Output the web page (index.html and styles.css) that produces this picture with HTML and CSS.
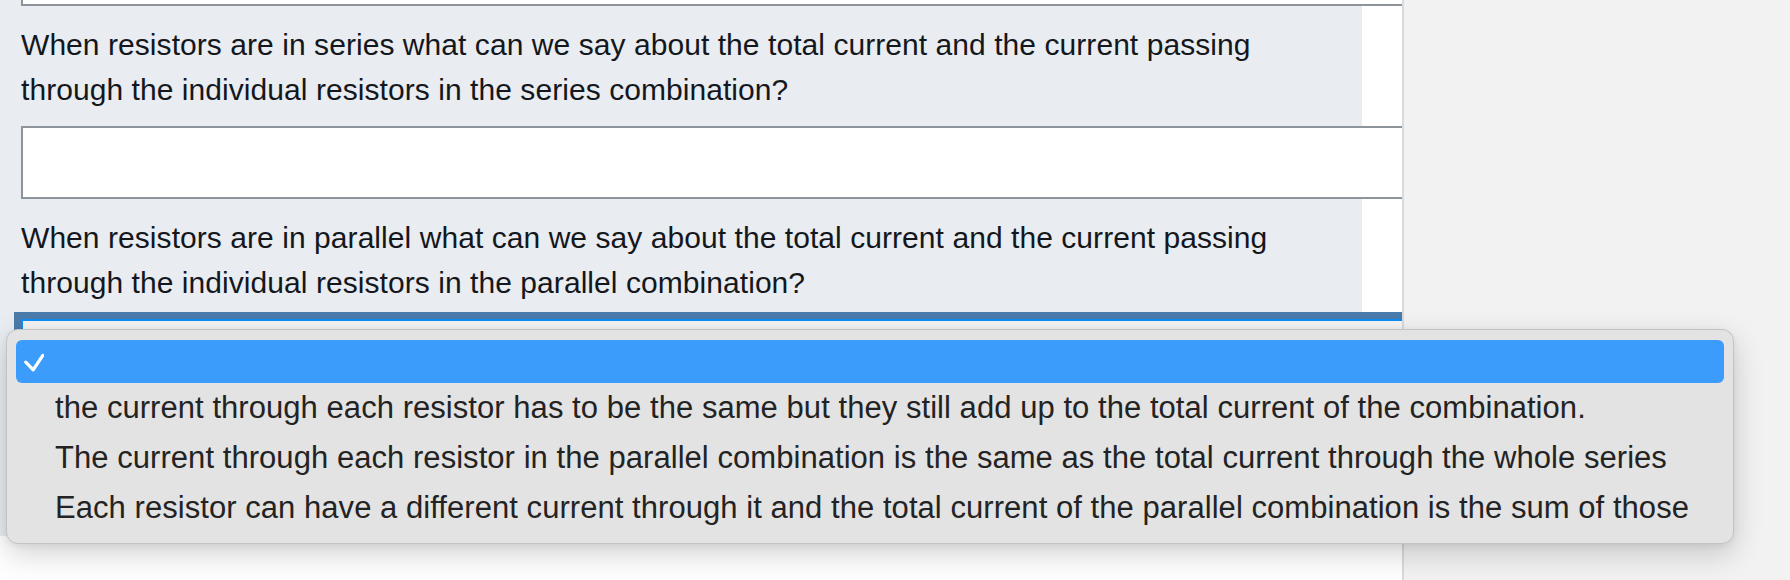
FILE: index.html
```html
<!DOCTYPE html>
<html lang="en">
<head>
    <meta charset="UTF-8">
    <meta name="viewport" content="width=device-width, initial-scale=1.0">
    <title>Resistors Worksheet</title>
    <link rel="stylesheet" href="styles.css">
</head>
<body>
    <!-- Worksheet -->
    <div class="sheet">
        <div class="panel">
            <input type="text" class="answer">
            <p class="question">When resistors are in series what can we say about the total current and the current passing through the individual resistors in the series combination?</p>
            <input type="text" class="answer">
            <p class="question">When resistors are in parallel what can we say about the total current and the current passing through the individual resistors in the parallel combination?</p>
            <div class="choice"></div>
        </div>
    </div>
    <!-- Open select menu -->
    <ul class="menu">
        <li class="menu-item selected">
            <svg class="check" width="20" height="20" viewBox="0 0 20 20">
                <path d="M1.8 10.2 L9.2 17.8 L18.8 3.4" fill="none" stroke="#ffffff" stroke-width="3.3" stroke-linecap="round" stroke-linejoin="round"/>
            </svg>
        </li>
        <li class="menu-item">the current through each resistor has to be the same but they still add up to the total current of the combination.</li>
        <li class="menu-item">The current through each resistor in the parallel combination is the same as the total current through the whole series</li>
        <li class="menu-item">Each resistor can have a different current through it and the total current of the parallel combination is the sum of those</li>
    </ul>
</body>
</html>
```

FILE: styles.css
```css
/* Page */
body {
    margin: 0;
    background-color: #f2f2f2;
    font-family: "Liberation Sans", Arial, sans-serif;
}
/* Worksheet column */
.sheet {
    width: 1402px;
    height: 100vh;
    background-color: #ffffff;
    border-right: 2px solid #dadada;
    overflow: hidden;
}
.panel {
    width: 1362px;
    box-sizing: border-box;
    margin-top: -67px;
    padding: 0 0 144px 21px;
    background-color: #e9ecf1;
}
/* Questions */
.question {
    margin: 16px 0 14px;
    padding-right: 40px;
    font-size: 30px;
    line-height: 45px;
    letter-spacing: 0.06px;
    color: #14171c;
}
.answer {
    display: block;
    width: 1400px;
    height: 73px;
    box-sizing: border-box;
    margin: 0;
    border: 2px solid #8e949b;
    background-color: #ffffff;
    outline: none;
}
.choice {
    width: 1400px;
    height: 73px;
    box-sizing: border-box;
    border: 2px solid #0a8ef6;
    background-color: #f4f4f4;
    box-shadow: 0 0 0 7px #4a7bab;
}
/* Select menu */
.menu {
    position: absolute;
    left: 6px;
    top: 329px;
    width: 1728px;
    box-sizing: border-box;
    margin: 0;
    padding: 10px 9px;
    list-style: none;
    background-color: #e3e3e3;
    border: 1px solid #c3c3c3;
    border-radius: 12px;
    box-shadow: 0 10px 30px rgba(0, 0, 0, 0.18), 0 2px 6px rgba(0, 0, 0, 0.06);
    font-size: 31px;
    letter-spacing: 0.05px;
    color: #232323;
}
.menu-item {
    height: 50px;
    line-height: 50px;
    padding-left: 39px;
    white-space: nowrap;
}
.menu-item.selected {
    display: flex;
    align-items: center;
    height: 43px;
    padding-left: 8px;
    border-radius: 6px;
    background-color: #3b9cfc;
}
.check {
    display: block;
}
```
